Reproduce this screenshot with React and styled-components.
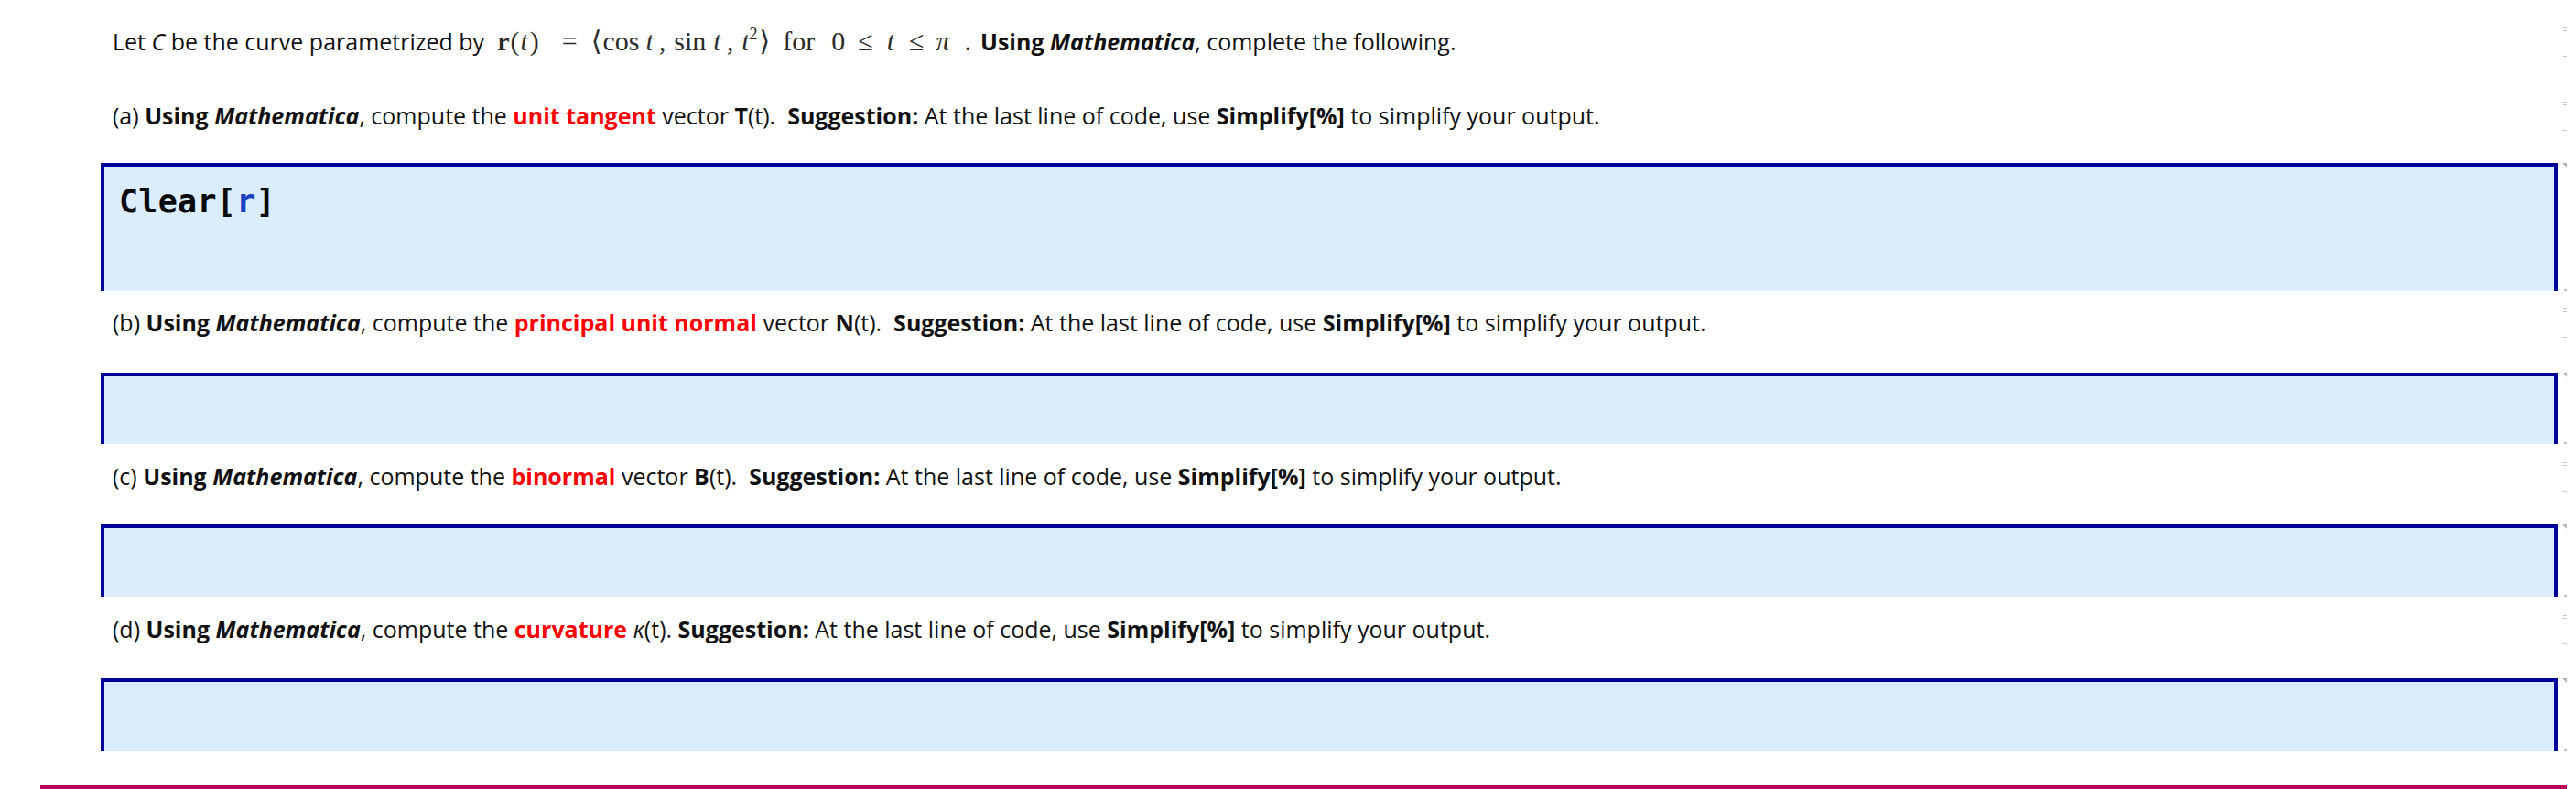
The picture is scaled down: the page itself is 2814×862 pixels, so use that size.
import React from "react";
import styled, { createGlobalStyle } from "styled-components";

const GlobalStyle = createGlobalStyle`
  html, body {
    margin: 0;
    padding: 0;
    background: #ffffff;
  }
  body {
    font-family: "Open Sans", "Noto Sans", sans-serif;
    color: #111111;
  }
`;

const Page = styled.div`
  width: 2814px;
  height: 862px;
  position: relative;
  overflow: hidden;
  background: #fff;
`;

const Notebook = styled.div`
  display: flex;
  flex-direction: column;
  padding: 27px 10px 0 110px;
`;

const CellRow = styled.div`
  display: flex;
  align-items: stretch;
  margin-top: ${(p) => p.$top || 0}px;
`;

const TextLine = styled.p`
  flex: 1;
  margin: 0;
  padding-left: 13px;
  font-size: 25px;
  line-height: 36px;
  height: 36px;
  white-space: nowrap;
`;

const Bold = styled.b`
  font-weight: 700;
`;

const BoldItalic = styled.b`
  font-weight: 700;
  font-style: italic;
`;

const Red = styled.b`
  font-weight: 700;
  color: #ff0000;
`;

const Ital = styled.i`
  font-style: italic;
`;

const Math = styled.span`
  font-family: "Liberation Serif", "DejaVu Serif", serif;
  font-size: 30px;
  color: #2a2a2a;
  margin: 0 10px 0 14px;
  white-space: nowrap;
`;

const M = styled.span`
  display: inline-block;
  margin-left: ${(p) => p.$ml || 0}px;
  font-weight: ${(p) => (p.$bold ? 700 : 400)};
  font-style: ${(p) => (p.$it ? "italic" : "normal")};
`;

const Sup = styled.sup`
  font-size: 18px;
  vertical-align: 12px;
  line-height: 0;
`;

const InputCell = styled.div`
  flex: 1;
  height: ${(p) => p.$h}px;
  box-sizing: border-box;
  background: #dbedfd;
  border: 4px solid #000099;
  border-bottom: none;
  padding: 18px 16px;
`;

const Code = styled.pre`
  margin: 0;
  font-family: "DejaVu Sans Mono", "Liberation Mono", monospace;
  font-weight: 700;
  font-size: 35px;
  line-height: 40px;
  letter-spacing: 0.3px;
  color: #0a0a0a;
`;

const Sym = styled.span`
  color: #1a3fc0;
`;

const Bracket = styled.div`
  width: 10px;
  position: relative;
`;

const BracketTop = styled.span`
  position: absolute;
  top: 0;
  right: 0;
  width: 0;
  height: 0;
  border-top: 5px solid #b4b4b4;
  border-left: 5px solid transparent;
`;

const BracketTick = styled.span`
  position: absolute;
  bottom: 0;
  right: 0;
  width: 3px;
  height: 2px;
  background: #c0c0c0;
`;

const TextMark = styled.span`
  position: absolute;
  top: ${(p) => p.$y}px;
  right: 0;
  width: 4px;
  height: ${(p) => p.$h || 2}px;
  border-top: 1px solid #c4c4c4;
  border-bottom: ${(p) => (p.$double ? "1px solid #c4c4c4" : "none")};
  box-sizing: border-box;
`;

const Divider = styled.div`
  position: absolute;
  left: 44px;
  width: 2760px;
  top: 858px;
  height: 4px;
  background: #b80457;
`;

const suggestion = (
  <>
    <Bold>Suggestion:</Bold> At the last line of code, use <Bold>Simplify[%]</Bold> to simplify your output.
  </>
);

const parts = [
  { label: "(a)", what: "unit tangent", vec: "T", h: 140, gapText: 45, gapCell: 34, code: true },
  { label: "(b)", what: "principal unit normal", vec: "N", h: 78, gapText: 16, gapCell: 37 },
  { label: "(c)", what: "binormal", vec: "B", h: 79, gapText: 17, gapCell: 35 },
  { label: "(d)", what: "curvature", vec: null, h: 79, gapText: 17, gapCell: 36 },
];

function TextBracket() {
  return (
    <Bracket>
      <TextMark $y={3} $h={4} $double />
      <TextMark $y={34} $h={2} />
    </Bracket>
  );
}

export default function App() {
  return (
    <Page>
      <GlobalStyle />
      <Notebook>
        <CellRow>
          <TextLine>
            Let <Ital>C</Ital> be the curve parametrized by
            <Math>
              <M $bold>r</M>
              <M $ml={1}>(</M>
              <M $it $ml={1}>t</M>
              <M $ml={2}>)</M>
              <M $ml={25}>=</M>
              <M $ml={15}>⟨</M>
              <M $ml={1}>cos</M>
              <M $it $ml={7}>t</M>
              <M $ml={6}>,</M>
              <M $ml={9}>sin</M>
              <M $it $ml={8}>t</M>
              <M $ml={6}>,</M>
              <M $it $ml={9}>t</M>
              <Sup>2</Sup>
              <M $ml={2}>⟩</M>
              <M $ml={14}>for</M>
              <M $ml={18}>0</M>
              <M $ml={14}>≤</M>
              <M $it $ml={15}>t</M>
              <M $ml={16}>≤</M>
              <M $it $ml={13}>π</M>
              <M $ml={16}>.</M>
            </Math>
            <Bold>Using</Bold> <BoldItalic>Mathematica</BoldItalic>, complete the following.
          </TextLine>
          <TextBracket />
        </CellRow>

        {parts.map((p) => (
          <React.Fragment key={p.label}>
            <CellRow $top={p.gapText}>
              <TextLine>
                {p.label} <Bold>Using</Bold> <BoldItalic>Mathematica</BoldItalic>, compute the <Red>{p.what}</Red>{" "}
                {p.vec ? (
                  <>
                    vector <Bold>{p.vec}</Bold>(t).&nbsp;{" "}
                  </>
                ) : (
                  <>
                    <Ital>κ</Ital>(t).{" "}
                  </>
                )}
                {suggestion}
              </TextLine>
              <TextBracket />
            </CellRow>
            <CellRow $top={p.gapCell}>
              <InputCell $h={p.h}>
                {p.code && (
                  <Code>
                    Clear[<Sym>r</Sym>]
                  </Code>
                )}
              </InputCell>
              <Bracket>
                <BracketTop />
                <BracketTick />
              </Bracket>
            </CellRow>
          </React.Fragment>
        ))}
      </Notebook>
      <Divider />
    </Page>
  );
}
